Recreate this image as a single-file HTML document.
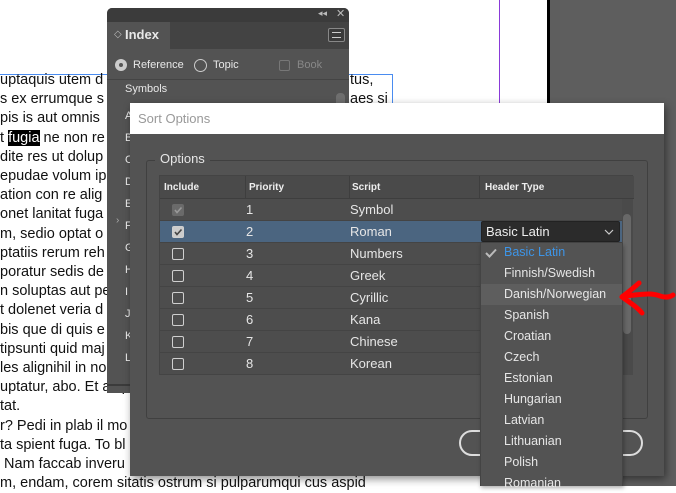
<!DOCTYPE html>
<html><head><meta charset="utf-8"><style>
*{margin:0;padding:0;box-sizing:border-box}
body{width:676px;height:486px;overflow:hidden;background:#fff;position:relative;font-family:"Liberation Sans","DejaVu Sans",sans-serif}
.a{position:absolute}
.txt{position:absolute;left:0;top:71px;font-size:14.5px;line-height:19.2px;color:#111;white-space:pre}
.ui{color:#e8e8e8;font-size:12px}
.cb{position:absolute;width:12px;height:12px;border:1px solid #cfcfcf;border-radius:2px}
.row{position:absolute;left:0;width:463px;height:22px;border-bottom:1px solid #444;font-size:13px;color:#e6e6e6}
.row span{position:absolute;top:3px}
.mi{position:absolute;left:23px;font-size:12.5px;color:#e6e6e6}
</style></head><body>
<div class="a" style="left:548px;top:0;width:128px;height:486px;background:#5e5e5e"></div>
<div class="a" style="left:547px;top:0;width:3px;height:486px;background:#000"></div>
<div class="a" style="left:499px;top:0;width:1px;height:105px;background:#8a3ad8"></div>
<div class="a" style="left:0;top:74px;width:393px;height:1px;background:#4a8cf0"></div>
<div class="a" style="left:392px;top:74px;width:1px;height:30px;background:#4a8cf0"></div>
<div class="txt">uptaquis utem d
s ex errumque s
pis is aut omnis
t <span style="background:#000;color:#fff">fugia</span> ne non re
dite res ut dolup
epudae volum ip
ation con re alig
onet lanitat fuga
m, sedio optat o
ptatiis rerum reh
poratur sedis de
n soluptas aut pe
t dolenet veria d
bis que di quis e
tipsunti quid maj
les alignihil in no
uptatur, abo. Et aliqu
tat.
r? Pedi in plab il mo
ta spient fuga. To bl
 Nam faccab inveru
m, endam, corem sitatis ostrum si pulparumqui cus aspid</div>
<div class="txt" style="left:350px">tus,
aes si</div>

<!-- Index panel -->
<div class="a" style="left:107px;top:8px;width:242px;height:385px;background:#535353;border-radius:5px 5px 0 0;overflow:hidden">
 <div class="a" style="left:0;top:0;width:242px;height:14px;background:#3b3b3b"></div>
 <div class="a ui" style="left:211px;top:0;font-size:9px;color:#bbb">◂◂</div>
 <div class="a ui" style="left:229px;top:-1px;font-size:11px;font-weight:bold;color:#bbb">✕</div>
 <div class="a" style="left:0;top:14px;width:242px;height:27px;background:#434343"></div>
 <div class="a" style="left:0;top:14px;width:63px;height:27px;background:#535353"></div>
 <div class="a ui" style="left:7px;top:21px;font-size:10px;color:#bbb">◇</div>
 <div class="a ui" style="left:18px;top:19px;font-size:13px;font-weight:bold">Index</div>
 <div class="a" style="left:221px;top:20px;width:17px;height:14px;border:1px solid #888;border-radius:2px;background:#3a3a3a"></div>
 <div class="a" style="left:225px;top:24px;width:9px;height:6px;border-top:1px solid #ccc;border-bottom:1px solid #ccc"></div>
 <div class="a" style="left:8px;top:51px;width:12px;height:12px;border-radius:50%;background:#ccc"></div>
 <div class="a" style="left:12px;top:55px;width:4px;height:4px;border-radius:50%;background:#555"></div>
 <div class="a ui" style="left:26px;top:51px;font-size:11px">Reference</div>
 <div class="a" style="left:87px;top:51px;width:13px;height:13px;border-radius:50%;border:1px solid #ccc"></div>
 <div class="a ui" style="left:106px;top:51px;font-size:11px">Topic</div>
 <div class="a" style="left:172px;top:52px;width:11px;height:11px;border:1px solid #777;border-radius:2px"></div>
 <div class="a ui" style="left:190px;top:51px;font-size:11px;color:#888">Book</div>
 <div class="a" style="left:0;top:71px;width:242px;height:1px;background:#444"></div>
 <div class="a ui" style="left:18px;top:75px;font-size:11px">Symbols</div>
 <div class="a" style="left:229px;top:85px;width:9px;height:290px;background:#5a5a5a;border-radius:4px"></div>
 <div class="a" style="left:229px;top:85px;width:9px;height:20px;background:#6e6e6e;border-radius:4px"></div>
 <div class="a ui" style="left:18px;top:97px;font-size:11px;line-height:22px;color:#eee">A<br>B<br>C<br>D<br>E<br>F<br>G<br>H<br>I<br>J<br>K<br>L</div>
 <div class="a ui" style="left:9px;top:207px;font-size:10px;color:#aaa">›</div>
 <div class="a" style="left:0;top:376px;width:242px;height:2px;background:#3b3b3b"></div>
</div>

<!-- Sort Options dialog -->
<div class="a" style="left:130px;top:103px;width:534px;height:373px;background:#535353;box-shadow:2px 3px 8px rgba(0,0,0,.45)">
 <div class="a" style="left:0;top:0;width:534px;height:31px;background:#fff"></div>
 <div class="a" style="left:8px;top:8px;font-size:13px;color:#999">Sort Options</div>
 <div class="a" style="left:16px;top:57px;width:502px;height:259px;border:1px solid #404040;border-radius:3px"></div>
 <div class="a" style="left:25px;top:48px;padding:0 5px;background:#535353;font-size:13px;color:#e6e6e6">Options</div>
 <div class="a" style="left:29px;top:72px;width:474px;height:200px;background:#4d4d4d;border:1px solid #444">
  <div class="a" style="left:0;top:0;width:474px;height:23px;background:#4a4a4a;border-bottom:1px solid #3e3e3e;font-size:10px;font-weight:bold;color:#eee">
   <span class="a" style="left:4px;top:6px">Include</span>
   <span class="a" style="left:85px;top:0;width:1px;height:23px;background:#3e3e3e"></span>
   <span class="a" style="left:89px;top:6px">Priority</span>
   <span class="a" style="left:189px;top:0;width:1px;height:23px;background:#3e3e3e"></span>
   <span class="a" style="left:192px;top:6px">Script</span>
   <span class="a" style="left:319px;top:0;width:1px;height:23px;background:#3e3e3e"></span>
   <span class="a" style="left:325px;top:6px">Header Type</span>
  </div>
  <div class="row" style="top:23px"><div class="cb" style="left:12px;top:5px;background:#6a6a6a;border-color:#6a6a6a"></div><svg class="a" style="left:12px;top:5px" width="12" height="12"><path d="M3 6 L5 8.5 L9.5 3.5" fill="none" stroke="#999" stroke-width="1.6"/></svg><span style="left:86px">1</span><span style="left:190px">Symbol</span></div>
  <div class="row" style="top:45px;background:#4b6580"><div class="cb" style="left:12px;top:5px;background:#ccc"></div><svg class="a" style="left:12px;top:5px" width="12" height="12"><path d="M3 6 L5 8.5 L9.5 3.5" fill="none" stroke="#444" stroke-width="1.6"/></svg><span style="left:86px">2</span><span style="left:190px">Roman</span></div>
  <div class="row" style="top:67px"><div class="cb" style="left:12px;top:5px"></div><span style="left:86px">3</span><span style="left:190px">Numbers</span></div>
  <div class="row" style="top:89px"><div class="cb" style="left:12px;top:5px"></div><span style="left:86px">4</span><span style="left:190px">Greek</span></div>
  <div class="row" style="top:111px"><div class="cb" style="left:12px;top:5px"></div><span style="left:86px">5</span><span style="left:190px">Cyrillic</span></div>
  <div class="row" style="top:133px"><div class="cb" style="left:12px;top:5px"></div><span style="left:86px">6</span><span style="left:190px">Kana</span></div>
  <div class="row" style="top:155px"><div class="cb" style="left:12px;top:5px"></div><span style="left:86px">7</span><span style="left:190px">Chinese</span></div>
  <div class="row" style="top:177px"><div class="cb" style="left:12px;top:5px"></div><span style="left:86px">8</span><span style="left:190px">Korean</span></div>
  <div class="a" style="left:462px;top:23px;width:11px;height:176px;background:#4a4a4a"></div>
  <div class="a" style="left:463px;top:38px;width:8px;height:120px;background:#686868;border-radius:4px"></div>
 </div>
 <div class="a" style="left:329px;top:327px;width:184px;height:26px;border:2px solid #ddd;border-radius:13px"></div>
</div>

<!-- select + menu -->
<div class="a" style="left:481px;top:221px;width:139px;height:21px;background:#2b2b2b;border:1px solid #222;border-radius:2px;font-size:13px;color:#eee;padding:2px 0 0 4px">Basic Latin<svg class="a" style="left:122px;top:6px" width="10" height="8"><path d="M1 2 L5 6 L9 2" fill="none" stroke="#ccc" stroke-width="1.2"/></svg></div>
<div class="a" style="left:480px;top:243px;width:143px;height:243px;background:#535353;border-left:1px solid #444;border-right:1px solid #444;box-shadow:1px 2px 4px rgba(0,0,0,.3)">
 <div class="a" style="left:0;top:41px;width:141px;height:21px;background:#5e5e5e"></div>
 <svg class="a" style="left:4px;top:5px" width="12" height="10"><path d="M1 5 L4.5 8.5 L11 1.5" fill="none" stroke="#bbb" stroke-width="2"/></svg>
 <div class="mi" style="top:2px;color:#3d95e8">Basic Latin</div>
 <div class="mi" style="top:23px">Finnish/Swedish</div>
 <div class="mi" style="top:44px">Danish/Norwegian</div>
 <div class="mi" style="top:65px">Spanish</div>
 <div class="mi" style="top:86px">Croatian</div>
 <div class="mi" style="top:107px">Czech</div>
 <div class="mi" style="top:128px">Estonian</div>
 <div class="mi" style="top:149px">Hungarian</div>
 <div class="mi" style="top:170px">Latvian</div>
 <div class="mi" style="top:191px">Lithuanian</div>
 <div class="mi" style="top:212px">Polish</div>
 <div class="mi" style="top:233px">Romanian</div>
</div>

<svg class="a" style="left:0;top:0" width="676" height="486"><g fill="none" stroke="#f00" stroke-width="5" stroke-linecap="round" stroke-linejoin="round"><path d="M622 297 C632 289 636 286 639 283"/><path d="M622 297 C632 304 638 308 642 313"/><path d="M623 296 C640 295 650 292 660 296 C666 298 670 297 673 295"/></g></svg>
</body></html>
